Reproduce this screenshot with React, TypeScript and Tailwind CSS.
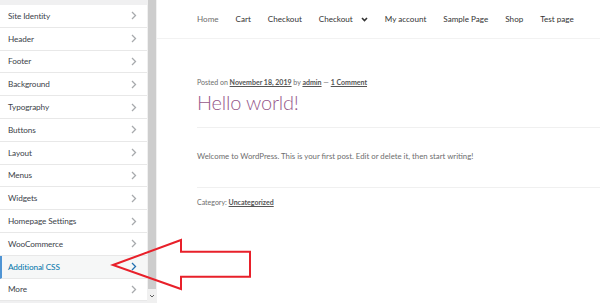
import React from "react";

const items = [
  "Site Identity",
  "Header",
  "Footer",
  "Background",
  "Typography",
  "Buttons",
  "Layout",
  "Menus",
  "Widgets",
  "Homepage Settings",
  "WooCommerce",
  "Additional CSS",
  "More",
];

function Chevron({ active }: { active?: boolean }) {
  return (
    <svg width="6" height="9" viewBox="0 0 6 9" className="shrink-0">
      <path d="M1 1 L4.5 4.5 L1 8" fill="none" stroke={active ? "#2271b1" : "#a7aaad"} strokeWidth="1.3" />
    </svg>
  );
}

export default function App() {
  const nav = ["Home", "Cart", "Checkout", "Checkout", "My account", "Sample Page", "Shop", "Test page"];
  return (
    <div className="relative flex h-[303px] w-[600px] overflow-hidden bg-white" style={{ fontFamily: "Lato, 'Open Sans', sans-serif" }}>
      {/* Sidebar */}
      <div className="flex h-full w-[157px] shrink-0 bg-[#f0f0f1]">
        <div className="flex w-[147px] flex-col pt-[5px]">
          {items.map((it) => {
            const active = it === "Additional CSS";
            return (
              <div
                key={it}
                className={`flex h-[22.8px] items-center justify-between whitespace-nowrap border-b border-[#e8e8e8] pr-[10px] text-[8.2px] tracking-[-0.1px] ${
                  active ? "border-l-[2px] border-l-[#4f94d4] bg-[#f6f7f7] pl-[6px] text-[#0073aa]" : "bg-white pl-[8px] text-[#3c434a]"
                }`}
              >
                <span>{it}</span>
                <Chevron active={active} />
              </div>
            );
          })}
        </div>
        <div className="flex w-[10px] flex-col bg-[#f0f0f0]">
          <div className="mx-[1px] h-[289px] bg-[#cdcdcd]" />
          <div className="flex flex-1 items-center justify-center">
            <svg width="6" height="4" viewBox="0 0 6 4">
              <path d="M1 1 L3 3 L5 1" fill="none" stroke="#606060" strokeWidth="1" />
            </svg>
          </div>
        </div>
      </div>

      {/* Main */}
      <div className="flex flex-1 flex-col">
        <div className="flex h-[39px] items-center gap-[17px] whitespace-nowrap border-b border-[#f2f2f2] pl-[40px] pt-[1px] text-[8.1px] text-[#333333]">
          {nav.map((n, i) => (
            <div key={i} className={`flex items-center ${i === 0 ? "text-[#6d6d6d]" : ""}`}>
              <span>{n}</span>
              {i === 3 && (
                <svg width="7" height="5" viewBox="0 0 7 5" className="ml-[8px]">
                  <path d="M1 1 L3.5 3.5 L6 1" fill="none" stroke="#333" strokeWidth="1.6" />
                </svg>
              )}
            </div>
          ))}
        </div>
        <div className="pl-[40px]">
          <div className="mt-[38px] whitespace-nowrap text-[7px] text-[#6d6d6d]">
            Posted on <span className="font-bold text-[#555] underline">November 18, 2019</span> by{" "}
            <span className="font-bold text-[#555] underline">admin</span> —{" "}
            <span className="font-bold text-[#555] underline">1 Comment</span>
          </div>
          <div className="mt-[1px] text-[20px] font-light leading-[26px] tracking-[-0.2px] text-[#96588a]">Hello world!</div>
          <div className="mt-[12px] border-t border-[#f0f0f0]" />
          <div className="mt-[23px] whitespace-nowrap text-[7.8px] text-[#6d6d6d]">
            Welcome to WordPress. This is your first post. Edit or delete it, then start writing!
          </div>
          <div className="mt-[25px] border-t border-[#f0f0f0]" />
          <div className="mt-[9px] text-[7px] text-[#6d6d6d]">
            Category: <span className="font-bold text-[#555] underline">Uncategorized</span>
          </div>
        </div>
      </div>

      {/* Red arrow overlay */}
      <svg className="pointer-events-none absolute left-0 top-0" width="600" height="303" viewBox="0 0 600 303">
        <polygon
          points="113,265 181,240 181,251.7 250,251.7 250,276.7 181,276.7 181,289"
          fill="none"
          stroke="#e8202a"
          strokeWidth="2"
        />
      </svg>
    </div>
  );
}
